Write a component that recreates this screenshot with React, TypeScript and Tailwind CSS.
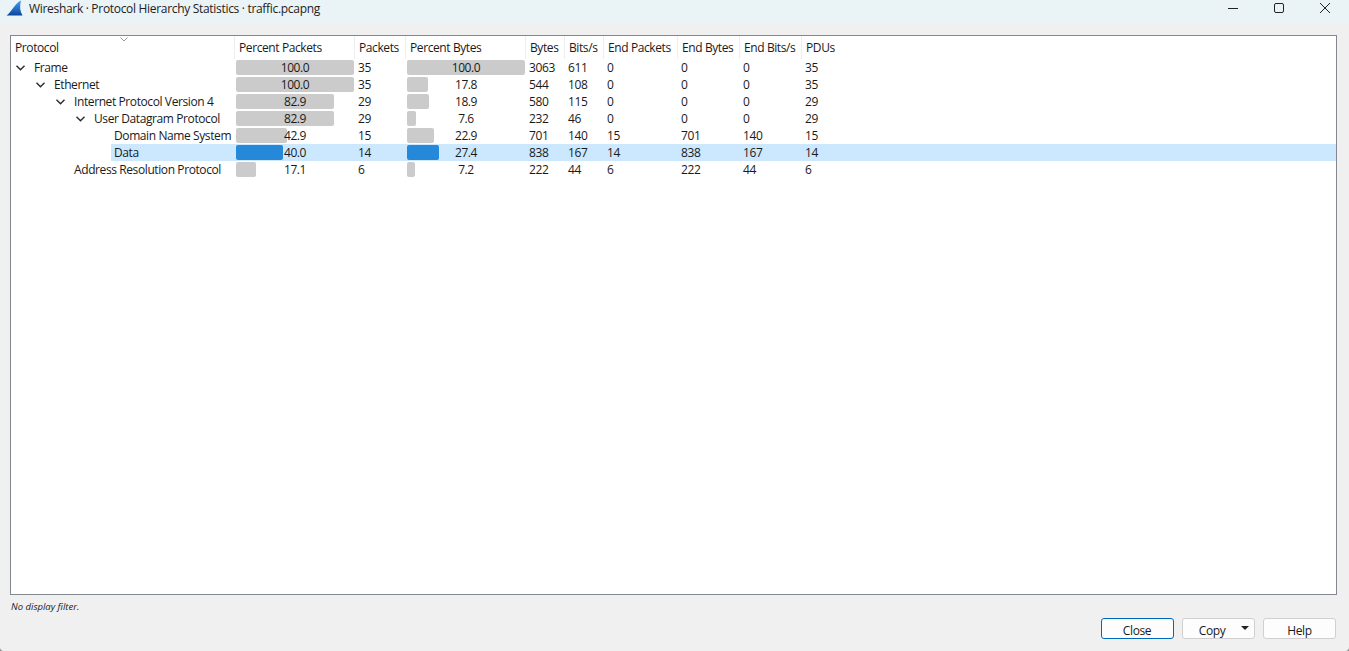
const COLS = [
  { label: "Protocol", w: "w-[224px]" },
  { label: "Percent Packets", w: "w-[120px]" },
  { label: "Packets", w: "w-[51px]" },
  { label: "Percent Bytes", w: "w-[120px]" },
  { label: "Bytes", w: "w-[39px]" },
  { label: "Bits/s", w: "w-[39px]" },
  { label: "End Packets", w: "w-[74px]" },
  { label: "End Bytes", w: "w-[62px]" },
  { label: "End Bits/s", w: "w-[62px]" },
  { label: "PDUs", w: "w-[60px]" },
];

type Row = {
  name: string;
  depth: number;
  open?: boolean;
  selected?: boolean;
  pctPackets: number;
  packets: number;
  pctBytes: number;
  bytes: number;
  bits: number;
  endPackets: number;
  endBytes: number;
  endBits: number;
  pdus: number;
};

const ROWS: Row[] = [
  { name: "Frame", depth: 0, open: true, pctPackets: 100, packets: 35, pctBytes: 100, bytes: 3063, bits: 611, endPackets: 0, endBytes: 0, endBits: 0, pdus: 35 },
  { name: "Ethernet", depth: 1, open: true, pctPackets: 100, packets: 35, pctBytes: 17.8, bytes: 544, bits: 108, endPackets: 0, endBytes: 0, endBits: 0, pdus: 35 },
  { name: "Internet Protocol Version 4", depth: 2, open: true, pctPackets: 82.9, packets: 29, pctBytes: 18.9, bytes: 580, bits: 115, endPackets: 0, endBytes: 0, endBits: 0, pdus: 29 },
  { name: "User Datagram Protocol", depth: 3, open: true, pctPackets: 82.9, packets: 29, pctBytes: 7.6, bytes: 232, bits: 46, endPackets: 0, endBytes: 0, endBits: 0, pdus: 29 },
  { name: "Domain Name System", depth: 4, pctPackets: 42.9, packets: 15, pctBytes: 22.9, bytes: 701, bits: 140, endPackets: 15, endBytes: 701, endBits: 140, pdus: 15 },
  { name: "Data", depth: 4, selected: true, pctPackets: 40, packets: 14, pctBytes: 27.4, bytes: 838, bits: 167, endPackets: 14, endBytes: 838, endBits: 167, pdus: 14 },
  { name: "Address Resolution Protocol", depth: 2, pctPackets: 17.1, packets: 6, pctBytes: 7.2, bytes: 222, bits: 44, endPackets: 6, endBytes: 222, endBits: 44, pdus: 6 },
];

function SharkIcon() {
  return (
    <svg width="17" height="16" viewBox="0 0 17 16" className="block">
      <defs>
        <linearGradient id="fin" x1="0" y1="0" x2="0" y2="1">
          <stop offset="0" stopColor="#4a9ae6" />
          <stop offset="0.6" stopColor="#1f6cc8" />
          <stop offset="1" stopColor="#0d4496" />
        </linearGradient>
      </defs>
      <path d="M0.5 15.5 C5 13 8 4 15 0.5 C13.5 6 13.8 11 16.5 15.5 Z" fill="url(#fin)" />
    </svg>
  );
}

function Chevron() {
  return (
    <svg width="9" height="6" viewBox="0 0 9 6" className="block">
      <path d="M0.5 0.7L4.5 4.7L8.5 0.7" fill="none" stroke="#2a2a2a" strokeWidth="1.4" />
    </svg>
  );
}

function PercentBar({ value, selected }: { value: number; selected?: boolean }) {
  return (
    <div className="relative h-full w-[118px] ml-px">
      <div
        className={`absolute left-0 top-px bottom-px rounded-[2px] ${selected ? "bg-[#2588d8]" : "bg-[#cbcbcb]"}`}
        style={{ width: `${value}%` }}
      />
      <span className="absolute inset-0 text-center">{value.toFixed(1)}</span>
    </div>
  );
}

function Cell({ w, children }: { w: string; children: React.ReactNode }) {
  return <div className={`${w} shrink-0 pl-[3px]`}>{children}</div>;
}

function TreeRow({ row }: { row: Row }) {
  const indent = [5, 25, 45, 65, 83][row.depth];
  return (
    <div className="flex h-[17px] leading-[17px]">
      <div className="w-[224px] shrink-0 flex" style={{ paddingLeft: row.selected ? indent + 17 : indent }}>
        {row.open && (
          <div className="w-[18px] h-full flex items-center shrink-0">
            <Chevron />
          </div>
        )}
        <div className={`flex-1 whitespace-nowrap ${row.open ? "" : row.selected ? "pl-[3px]" : row.depth === 2 ? "pl-[18px]" : "pl-[20px]"} ${row.selected ? "bg-[#cce8ff]" : ""}`}>
          {row.name}
        </div>
      </div>
      <div className={`flex flex-1 ${row.selected ? "bg-[#cce8ff]" : ""}`}>
        <div className="w-[120px] shrink-0"><PercentBar value={row.pctPackets} selected={row.selected} /></div>
        <Cell w="w-[51px]">{row.packets}</Cell>
        <div className="w-[120px] shrink-0"><PercentBar value={row.pctBytes} selected={row.selected} /></div>
        <Cell w="w-[39px]">{row.bytes}</Cell>
        <Cell w="w-[39px]">{row.bits}</Cell>
        <Cell w="w-[74px]">{row.endPackets}</Cell>
        <Cell w="w-[62px]">{row.endBytes}</Cell>
        <Cell w="w-[62px]">{row.endBits}</Cell>
        <Cell w="w-[60px]">{row.pdus}</Cell>
      </div>
    </div>
  );
}

export default function App() {
  return (
    <div className="w-[1349px] h-[651px] overflow-hidden bg-[#8f8f8f]">
      <div className="w-full h-full flex flex-col rounded-b-[4px] overflow-hidden bg-[#f0f0f0] text-[12px] text-[#1a1a1a] font-['Open_Sans','Liberation_Sans',sans-serif] tracking-[-0.4px]">
        {/* title bar */}
        <div className="h-[24px] shrink-0 flex items-center bg-[#eaf3f6]">
          <div className="pl-[6px] pr-[6px] pb-[8px]"><SharkIcon /></div>
          <div className="flex-1 pb-[7px] text-[#222] tracking-[-0.31px]">Wireshark · Protocol Hierarchy Statistics · traffic.pcapng</div>
          <div className="flex items-center gap-[36px] pr-[19px] pb-[8px]">
            <svg width="10" height="10" viewBox="0 0 10 10"><path d="M0 5.5H10" stroke="#222" strokeWidth="1" /></svg>
            <svg width="10" height="10" viewBox="0 0 10 10"><rect x="0.5" y="0.5" width="9" height="9" rx="1.5" fill="none" stroke="#222" strokeWidth="1" /></svg>
            <svg width="10" height="10" viewBox="0 0 10 10"><path d="M0 0L10 10M10 0L0 10" stroke="#222" strokeWidth="1" /></svg>
          </div>
        </div>

        {/* tree */}
        <div className="ml-[10px] mr-[12px] mt-[11px] h-[560px] shrink-0 border border-[#828790] bg-white">
          <div className="relative flex h-[23px] leading-[24px]">
            <svg width="8" height="5" viewBox="0 0 8 5" className="absolute left-[109px] top-px">
              <path d="M0.5 0.5L4 4L7.5 0.5" fill="none" stroke="#9a9a9a" strokeWidth="1" />
            </svg>
            {COLS.map((c) => (
              <div key={c.label} className={`${c.w} shrink-0 pl-[4px] border-r border-[#eeeeee] last:border-r-0 whitespace-nowrap`}>
                {c.label}
              </div>
            ))}
          </div>
          {ROWS.map((r) => (
            <TreeRow key={r.name} row={r} />
          ))}
        </div>

        <div className="ml-[11px] mt-[5px] text-[9.5px] italic tracking-[0px] leading-[13px]">No display filter.</div>

        {/* buttons */}
        <div className="flex justify-end gap-[8px] pr-[13px] mt-[5px]">
          <button className="w-[73px] h-[21px] rounded-[3px] border border-[#0067c0] bg-[#fdfdfd] text-[#1a1a1a] leading-[20px] pt-[2px] pr-px">Close</button>
          <button className="relative w-[73px] h-[21px] rounded-[3px] border border-[#d0d0d0] bg-[#fdfdfd] leading-[20px] pt-[2px] pr-[13px]">
            Copy
            <span className="absolute right-[5px] top-[7px] w-0 h-0 border-l-[4px] border-r-[4px] border-t-[4px] border-l-transparent border-r-transparent border-t-[#222]" />
          </button>
          <button className="w-[73px] h-[21px] rounded-[3px] border border-[#d0d0d0] bg-[#fdfdfd] leading-[20px] pt-[2px]">Help</button>
        </div>
      </div>
    </div>
  );
}
